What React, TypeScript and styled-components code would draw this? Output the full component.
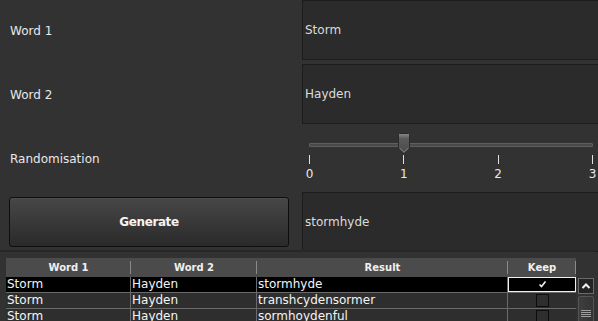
import React from "react";
import styled, { createGlobalStyle } from "styled-components";

const FONT_FAMILY = '"DejaVu Sans", Verdana, sans-serif';

const GlobalStyle = createGlobalStyle`
  html, body {
    margin: 0;
    padding: 0;
    background: #323232;
    overflow: hidden;
  }
  body {
    font-family: ${FONT_FAMILY};
  }
`;

const Root = styled.div`
  width: 598px;
  height: 321px;
  overflow: hidden;
  color: #e6e6e6;
  font-size: 12px;
`;

const Form = styled.div`
  display: grid;
  grid-template-columns: 280px 298px;
  grid-auto-rows: 60px;
  column-gap: 13px;
  row-gap: 4px;
  padding-left: 9px;
`;

const Label = styled.div`
  display: flex;
  align-items: center;
  padding-left: 1px;
  padding-top: 1px;
  color: #e8e8e8;
`;

const Field = styled.div`
  display: flex;
  align-items: center;
  padding-left: 2px;
  background: #2b2b2b;
  border: 1px solid #1c1c1c;
  color: #dcdcdc;
`;

const ButtonCell = styled.div`
  display: flex;
  align-items: center;
`;

const GenerateButton = styled.button`
  width: 280px;
  height: 50px;
  border: 1px solid #0e0e0e;
  border-radius: 3px;
  background: linear-gradient(#474747, #2a2a2a);
  box-shadow: inset 0 1px 0 #4e4e4e;
  color: #f4f4f4;
  font-family: ${FONT_FAMILY};
  font-size: 12px;
  letter-spacing: -0.4px;
  font-weight: bold;
  padding: 0;
`;

const Slider = styled.div`
  position: relative;
  padding: 15px 7px 0;
`;

const Groove = styled.div`
  width: 284px;
  height: 4px;
  box-sizing: border-box;
  background: #4a4a4a;
  border: 1px solid #5e5e5e;
  border-radius: 1px;
`;

const Handle = styled.svg`
  position: absolute;
  top: 5px;
`;

const TickRow = styled.div`
  display: flex;
  justify-content: space-between;
  width: 284px;
  margin-top: 8px;
`;

const Tick = styled.div`
  width: 1px;
  display: flex;
  flex-direction: column;
  align-items: center;
`;

const TickLine = styled.div`
  width: 1px;
  height: 9px;
  background: #e0e0e0;
`;

const TickNum = styled.div`
  margin-top: 3px;
  color: #e8e8e8;
  line-height: 14px;
`;

const TableFrame = styled.div`
  position: relative;
  margin-top: -2px;
  width: 595px;
  border-top: 2px solid #272727;
  padding: 6px 0 0 6px;
  box-sizing: border-box;
  display: flex;
  gap: 2px;
`;

const Grid = styled.div`
  width: 570px;
`;

const COLS = "125px 126px 251px 68px";

const HeaderRow = styled.div`
  display: grid;
  grid-template-columns: ${COLS};
  height: 19px;
  background: #4b4b4b;
`;

const HeaderCell = styled.div`
  position: relative;
  display: flex;
  align-items: center;
  justify-content: center;
  font-size: 10px;
  font-weight: bold;
  color: #f0f0f0;
  &::after {
    content: "";
    position: absolute;
    right: 0;
    top: 3px;
    bottom: 3px;
    width: 1px;
    background: #8a8a8a;
  }
`;

const Row = styled.div<{ $selected?: boolean }>`
  display: grid;
  grid-template-columns: ${COLS};
  height: 16px;
  box-sizing: border-box;
  border-bottom: 1px solid #6a6a6a;
  background: ${(p) => (p.$selected ? "#000" : "#2e2e2e")};
`;

const Cell = styled.div`
  display: flex;
  align-items: center;
  padding-left: 1px;
  border-right: 1px solid #6a6a6a;
  color: #f4f4f4;
  white-space: nowrap;
  overflow: hidden;
  line-height: 15px;
`;

const KeepCell = styled.div<{ $focus?: boolean }>`
  display: flex;
  align-items: center;
  justify-content: center;
  box-sizing: border-box;
  border: 1px solid ${(p) => (p.$focus ? "#f0f0f0" : "transparent")};
`;

const CheckBox = styled.div`
  width: 13px;
  height: 13px;
  box-sizing: border-box;
  border: 1px solid #0c0c0c;
`;

const ScrollBar = styled.div`
  width: 16px;
  margin-top: 20px;
  display: flex;
  flex-direction: column;
  gap: 2px;
`;

const ScrollButton = styled.div`
  height: 16px;
  box-sizing: border-box;
  border: 1px solid #6a6a6a;
  background: #242424;
  display: flex;
  align-items: center;
  justify-content: center;
`;

const ScrollHandle = styled.div`
  height: 60px;
  box-sizing: border-box;
  border: 1px solid #555;
  border-radius: 2px;
  background: linear-gradient(90deg, #3e3e3e, #343434);
  display: flex;
  flex-direction: column;
  align-items: center;
  padding-top: 13px;
  gap: 1px;
`;

const Grip = styled.div`
  width: 10px;
  height: 1px;
  background: #a0a0a0;
`;

const rows = [
  { w1: "Storm", w2: "Hayden", result: "stormhyde", keep: true },
  { w1: "Storm", w2: "Hayden", result: "transhcydensormer", keep: false },
  { w1: "Storm", w2: "Hayden", result: "sormhoydenful", keep: false },
  { w1: "Storm", w2: "Hayden", result: "haystorm", keep: false },
];

const SLIDER_MAX = 3;
const sliderValue = 1;

const App: React.FC = () => {
  const handleLeft = 7 + (284 * sliderValue) / SLIDER_MAX - 5.5;

  return (
    <Root>
      <GlobalStyle />
      <Form>
        <Label>Word 1</Label>
        <Field>Storm</Field>

        <Label>Word 2</Label>
        <Field>Hayden</Field>

        <Label>Randomisation</Label>
        <Slider>
          <Groove />
          <Handle style={{ left: handleLeft }} width="12" height="21" viewBox="0 0 12 21">
            <defs>
              <linearGradient id="hg" x1="0" y1="0" x2="0" y2="1">
                <stop offset="0" stopColor="#8a8a8a" />
                <stop offset="0.25" stopColor="#5a5a5a" />
                <stop offset="1" stopColor="#4a4a4a" />
              </linearGradient>
            </defs>
            <path d="M0.5 1.5 Q0.5 0.5 1.5 0.5 H10.5 Q11.5 0.5 11.5 1.5 V15 L6 20.5 L0.5 15 Z" fill="url(#hg)" stroke="#2a2a2a" />
            <path d="M1.5 15 L6 19.3 L10.5 15" fill="none" stroke="#8a8a8a" />
          </Handle>
          <TickRow>
            {[0, 1, 2, 3].map((n) => (
              <Tick key={n}>
                <TickLine />
                <TickNum>{n}</TickNum>
              </Tick>
            ))}
          </TickRow>
        </Slider>

        <ButtonCell>
          <GenerateButton>Generate</GenerateButton>
        </ButtonCell>
        <Field>stormhyde</Field>
      </Form>

      <TableFrame>
        <Grid>
          <HeaderRow>
            <HeaderCell>Word 1</HeaderCell>
            <HeaderCell>Word 2</HeaderCell>
            <HeaderCell>Result</HeaderCell>
            <HeaderCell>Keep</HeaderCell>
          </HeaderRow>
          {rows.map((r, i) => (
            <Row key={i} $selected={i === 0}>
              <Cell>{r.w1}</Cell>
              <Cell>{r.w2}</Cell>
              <Cell>{r.result}</Cell>
              <KeepCell $focus={i === 0}>
                {r.keep ? (
                  <svg width="13" height="13" viewBox="0 0 13 13">
                    <polyline points="3.5,6.5 5.5,8.5 9.5,3.5" fill="none" stroke="#f2f2f2" strokeWidth="1.6" />
                  </svg>
                ) : (
                  <CheckBox />
                )}
              </KeepCell>
            </Row>
          ))}
        </Grid>
        <ScrollBar>
          <ScrollButton>
            <svg width="10" height="8" viewBox="0 0 10 8">
              <polyline points="1.5,6 5,2.5 8.5,6" fill="none" stroke="#f2f2f2" strokeWidth="2" />
            </svg>
          </ScrollButton>
          <ScrollHandle>
            <Grip />
            <Grip />
            <Grip />
            <Grip />
          </ScrollHandle>
        </ScrollBar>
      </TableFrame>
    </Root>
  );
};

export default App;
